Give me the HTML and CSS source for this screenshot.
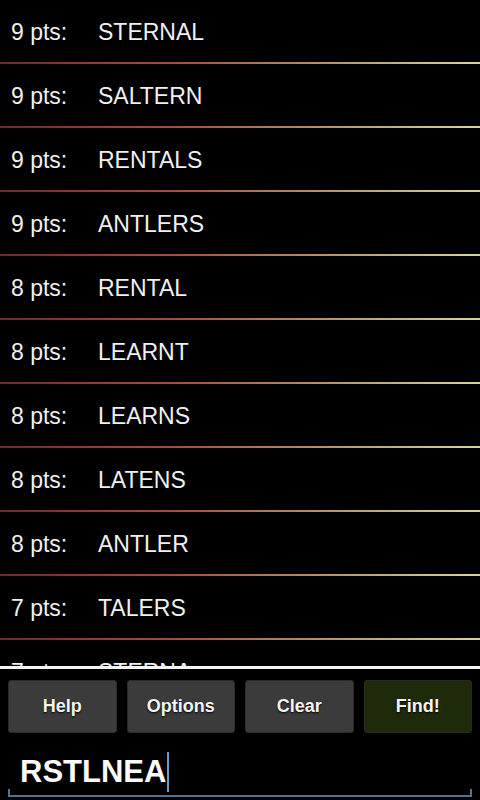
FILE: index.html
```html
<!DOCTYPE html>
<html lang="en">
<head>
  <meta charset="UTF-8">
  <title>Word Finder</title>
  <link rel="stylesheet" href="styles.css">
</head>
<body>

  <!-- Ergebnisliste -->
  <div class="results">
    <div class="row"><span class="pts">9 pts:</span><span class="word">STERNAL</span></div>
    <div class="row"><span class="pts">9 pts:</span><span class="word">SALTERN</span></div>
    <div class="row"><span class="pts">9 pts:</span><span class="word">RENTALS</span></div>
    <div class="row"><span class="pts">9 pts:</span><span class="word">ANTLERS</span></div>
    <div class="row"><span class="pts">8 pts:</span><span class="word">RENTAL</span></div>
    <div class="row"><span class="pts">8 pts:</span><span class="word">LEARNT</span></div>
    <div class="row"><span class="pts">8 pts:</span><span class="word">LEARNS</span></div>
    <div class="row"><span class="pts">8 pts:</span><span class="word">LATENS</span></div>
    <div class="row"><span class="pts">8 pts:</span><span class="word">ANTLER</span></div>
    <div class="row"><span class="pts">7 pts:</span><span class="word">TALERS</span></div>
    <div class="row"><span class="pts">7 pts:</span><span class="word">STERNA</span></div>
  </div>

  <!-- Steuerung -->
  <div class="panel">
    <div class="buttons">
      <button>Help</button>
      <button>Options</button>
      <button>Clear</button>
      <button class="find">Find!</button>
    </div>
    <div class="input">
      <span class="letters">RSTLNEA</span><span class="cursor"></span>
    </div>
  </div>

</body>
</html>
```

FILE: styles.css
```css
body {
  margin: 0;
  width: 480px;
  height: 800px;
  background-color: #000;
  color: #f0f0f0;
  font-family: "Liberation Sans", Arial, sans-serif;
  display: flex;
  flex-direction: column;
  overflow: hidden;
}

.results {
  height: 666px;
  overflow: hidden;
  border-bottom: 3px solid #f4f4f4;
  flex-shrink: 0;
}

.row {
  height: 64px;
  box-sizing: border-box;
  padding: 3px 0 0 11px;
  display: flex;
  align-items: center;
  font-size: 23px;
  border-bottom: 2px solid transparent;
  border-image: linear-gradient(to right, #6e2a24, #a0583e 40%, #d8d49a) 1;
}

.pts {
  width: 87px;
}

.panel {
  flex: 1;
  display: flex;
  flex-direction: column;
  padding: 0 8px;
}

.buttons {
  display: flex;
  gap: 10px;
  margin-top: 11px;
}

button {
  flex: 1;
  height: 53px;
  font-family: "Liberation Sans", Arial, sans-serif;
  font-size: 18px;
  font-weight: bold;
  color: #f4f4f4;
  text-shadow: 0 1px 2px #000;
  background-color: #3b3b3b;
  border: 1px solid #2a2a2a;
  border-radius: 3px;
}

button.find {
  background-color: #1f2a0b;
}

.input {
  position: relative;
  height: 47px;
  margin-top: 15px;
  padding-left: 12px;
  display: flex;
  align-items: center;
  border-bottom: 2px solid #4a7598;
}

.input::before,
.input::after {
  content: "";
  position: absolute;
  bottom: 0;
  width: 2px;
  height: 6px;
  background-color: #4a7598;
}

.input::before {
  left: 0;
}

.input::after {
  right: 0;
}

.letters {
  font-size: 31px;
  font-weight: bold;
  color: #fafafa;
}

.cursor {
  width: 2px;
  height: 40px;
  margin-left: 1px;
  background-color: #6c9ccc;
}
```
